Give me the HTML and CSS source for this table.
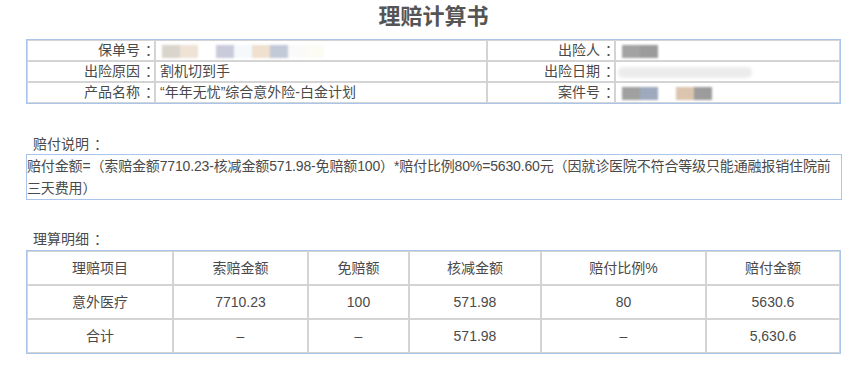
FILE: index.html
```html
<!DOCTYPE html>
<html lang="zh-CN">
<head>
<meta charset="utf-8">
<title>理赔计算书</title>
<link rel="stylesheet" href="styles.css">
</head>
<body>
<div class="page">
  <h1 class="title">理赔计算书</h1>

  <table class="info">
    <colgroup>
      <col class="c-label1"><col class="c-val1"><col class="c-label2"><col class="c-val2">
    </colgroup>
    <tr>
      <td class="label">保单号<span class="colon">：</span></td>
      <td class="val">
        <span class="mask">
          <i style="background:#d9d5cc"></i><i style="background:#efe3d6"></i><i style="background:#ffffff"></i><i style="background:#c9cbdb"></i><i style="background:#f6f9fc"></i><i style="background:#efe0cf"></i><i style="background:#c2c9d7"></i><i style="background:#fafafa"></i><i style="background:#fcfbf4"></i>
        </span>
      </td>
      <td class="label">出险人<span class="colon">：</span></td>
      <td class="val">
        <span class="mask"><i style="background:#a3a3a3"></i><i style="background:#9b9b9b"></i></span>
      </td>
    </tr>
    <tr>
      <td class="label">出险原因<span class="colon">：</span></td>
      <td class="val">割机切到手</td>
      <td class="label">出险日期<span class="colon">：</span></td>
      <td class="val"><span class="mask mask-strip"></span></td>
    </tr>
    <tr>
      <td class="label">产品名称<span class="colon">：</span></td>
      <td class="val">“年年无忧”综合意外险-白金计划</td>
      <td class="label">案件号<span class="colon">：</span></td>
      <td class="val">
        <span class="mask"><i style="background:#a0a0a0"></i><i style="background:#9ea9bd"></i><i style="background:#ffffff"></i><i style="background:#dbc5af"></i><i style="background:#9c9c9c"></i></span>
      </td>
    </tr>
  </table>

  <div class="section-label first">赔付说明<span class="colon">：</span></div>
  <div class="explain">赔付金额=（索赔金额7710.23-核减金额571.98-免赔额100）*赔付比例80%=5630.60元（因就诊医院不符合等级只能通融报销住院前三天费用）</div>

  <div class="section-label second">理算明细<span class="colon">：</span></div>
  <table class="detail">
    <colgroup>
      <col class="d1"><col class="d2"><col class="d3"><col class="d4"><col class="d5"><col class="d6">
    </colgroup>
    <tr>
      <td>理赔项目</td><td>索赔金额</td><td>免赔额</td><td>核减金额</td><td>赔付比例%</td><td>赔付金额</td>
    </tr>
    <tr>
      <td>意外医疗</td><td>7710.23</td><td>100</td><td>571.98</td><td>80</td><td>5630.6</td>
    </tr>
    <tr>
      <td>合计</td><td>–</td><td>–</td><td>571.98</td><td>–</td><td>5,630.6</td>
    </tr>
  </table>
</div>
</body>
</html>
```

FILE: styles.css
```css
* { box-sizing: border-box; }

html, body {
  margin: 0;
  padding: 0;
  background: #ffffff;
}

body {
  font-family: "Liberation Sans", "Noto Sans CJK SC", sans-serif;
  font-size: 14px;
  color: #4a4a4a;
}

.page {
  width: 815px;
  margin-left: 26px;
  padding-top: 1px;
}

.title {
  margin: -3px 0 9px 0;
  line-height: 32px;
  font-size: 22px;
  font-weight: bold;
  text-align: center;
  color: #555555;
  font-family: "Noto Sans CJK SC", sans-serif;
}

.colon {
  padding-left: 5px;
  margin-right: -5px;
}

table {
  width: 815px;
  table-layout: fixed;
  border-collapse: separate;
  border-spacing: 0;
  border: 1px solid #a9c5eb;
}

td {
  border: 1px solid #d4d4d4;
  padding: 0;
}

.info td {
  height: 21px;
  line-height: 19px;
}

.c-label1 { width: 128px; }
.c-val1 { width: 332px; }
.c-label2 { width: 128px; }
.c-val2 { width: 225px; }

.info .label {
  text-align: right;
  padding-right: 0;
}

.info .val {
  text-align: left;
  padding-left: 4px;
}

.mask {
  display: inline-flex;
  vertical-align: middle;
  height: 13px;
  margin-left: 2px;
  filter: blur(0.8px);
}

.mask i {
  display: block;
  width: 18px;
  height: 13px;
}

.mask-strip {
  width: 134px;
  height: 11px;
  background: #ececec;
  border-radius: 5px;
  filter: blur(1.5px);
  margin-left: -2px;
}

.section-label {
  line-height: 20px;
  padding-left: 7px;
}

.section-label.first {
  margin-top: 30px;
}

.section-label.second {
  margin-top: 29px;
  margin-bottom: 1px;
}

.explain {
  width: 816px;
  border: 1px solid #a9c5eb;
  line-height: 22px;
  letter-spacing: -0.15px;
}

.detail td {
  height: 34px;
  line-height: 32px;
  text-align: center;
}

.d1 { width: 146px; }
.d2 { width: 135px; }
.d3 { width: 101px; }
.d4 { width: 132px; }
.d5 { width: 165px; }
.d6 { width: 134px; }
```
